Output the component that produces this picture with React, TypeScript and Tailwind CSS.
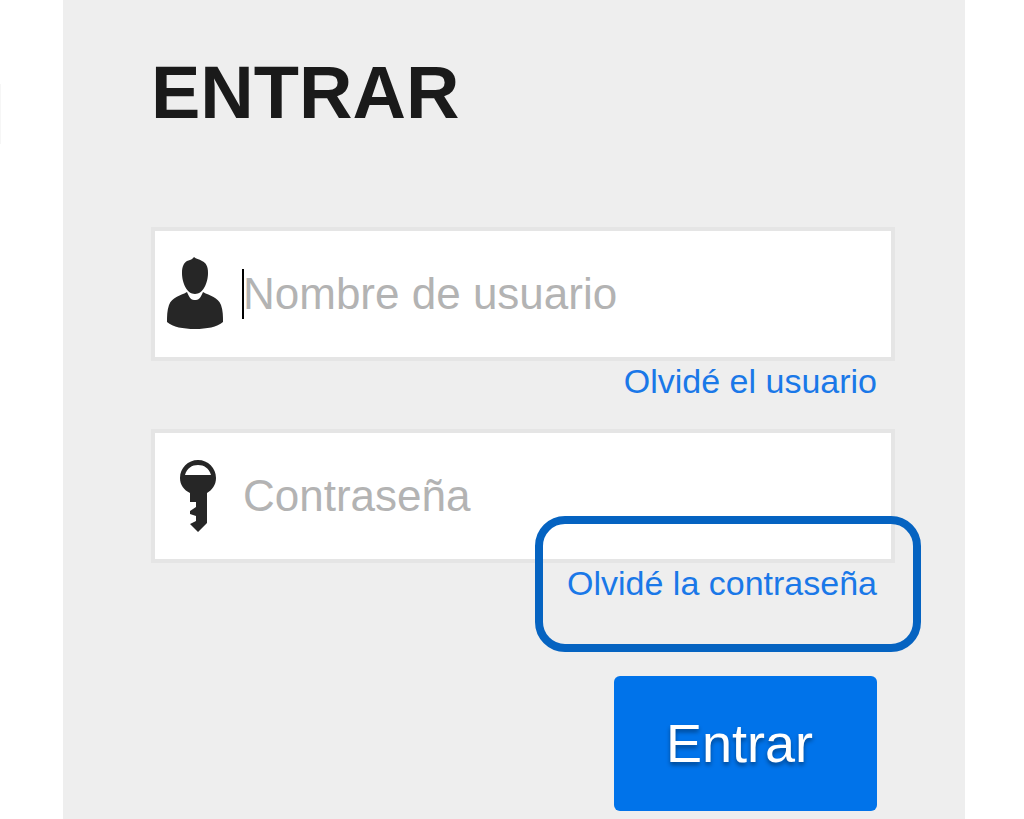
import type { ReactNode } from "react";

function UserIcon() {
  return (
    <svg viewBox="0 0 60 76" className="h-[76px] w-[60px]" fill="#262626" aria-hidden="true">
      <path d="M29 1C31 3 34 3 37 5C41 7 43 10 43 17C43 27 38 38 30 38C22 38 17 27 17 17C17 10 19 7 22 5C25 4 28 3 29 1Z" />
      <path d="M22 36C24 41 26 44 29 44H31C34 44 36 41 38 36C45 40 53 41 56 49C58 55 58 60 58 66C52 71 42 73 30 73C18 73 8 71 2 66C2 60 2 55 4 49C7 41 15 40 22 36Z" />
    </svg>
  );
}

function KeyIcon() {
  return (
    <svg viewBox="0 0 60 76" className="h-[76px] w-[60px]" fill="#262626" aria-hidden="true">
      <path
        fillRule="evenodd"
        d="M33 2C43 2 51 10 51 20C51 27 47 32 42 35V65L33 74L25 66L31 63V58L25 56V53L31 49V44H25V35C19 32 15 27 15 20C15 10 23 2 33 2ZM20 17H46C44 10 39 7 33 7C27 7 22 10 20 17Z"
      />
    </svg>
  );
}

type FieldProps = {
  id: string;
  label: string;
  type: string;
  icon: ReactNode;
  caret?: boolean;
};

function Field({ id, label, type, icon, caret = false }: FieldProps) {
  return (
    <div className="flex h-[134px] items-center border-4 border-[#e5e5e5] bg-white pl-2.5">
      <label htmlFor={id} aria-label={label} className="shrink-0">
        {icon}
      </label>
      <div className="relative ml-4 flex min-w-0 flex-1 items-center">
        {caret && <span className="absolute left-px h-[50px] w-0.5 bg-black" />}
        <input
          id={id}
          name={id}
          type={type}
          placeholder={label}
          aria-label={label}
          className="h-[72px] w-full bg-transparent pl-0.5 text-[44px] text-[#262626] outline-none placeholder:text-[#b3b3b3]"
        />
      </div>
    </div>
  );
}

export default function App() {
  return (
    <div className="flex min-h-screen bg-white font-['Liberation_Sans',Arial,sans-serif]">
      <div className="w-[63px] shrink-0 pt-[84px]">
        <div className="h-[60px] w-px bg-[#f6f6f6]" />
      </div>
      <main className="mr-[59px] min-w-0 flex-1 bg-[#eeeeee] pr-[70px] pl-[88px]">
        <h1 className="pt-[53px] text-[74px] leading-[80px] font-bold text-[#1a1a1a]">ENTRAR</h1>
        <form className="pt-[94px]" onSubmit={(event) => event.preventDefault()}>
          <Field id="usuario" label="Nombre de usuario" type="text" icon={<UserIcon />} caret />
          <div className="flex h-[68px] justify-end pr-[18px]">
            <a href="#usuario" className="text-[34px] leading-[40px] text-[#1a78e8]">
              Olvidé el usuario
            </a>
          </div>
          <Field id="contrasena" label="Contraseña" type="password" icon={<KeyIcon />} />
          <div className="flex h-[113px] justify-end pr-[18px]">
            <div className="relative">
              <a href="#contrasena" className="text-[34px] leading-[40px] text-[#1a78e8]">
                Olvidé la contraseña
              </a>
              <span className="pointer-events-none absolute -top-[47px] -right-[44px] -left-[32px] h-[136px] rounded-[30px] border-8 border-[#0563c1]" />
            </div>
          </div>
          <div className="flex justify-end pr-[18px]">
            <button
              type="submit"
              className="h-[135px] w-[263px] rounded-md bg-[#0073ea] pr-3 text-[54px] text-white [text-shadow:0_3px_4px_rgba(0,0,0,0.4)]"
            >
              Entrar
            </button>
          </div>
        </form>
      </main>
    </div>
  );
}
